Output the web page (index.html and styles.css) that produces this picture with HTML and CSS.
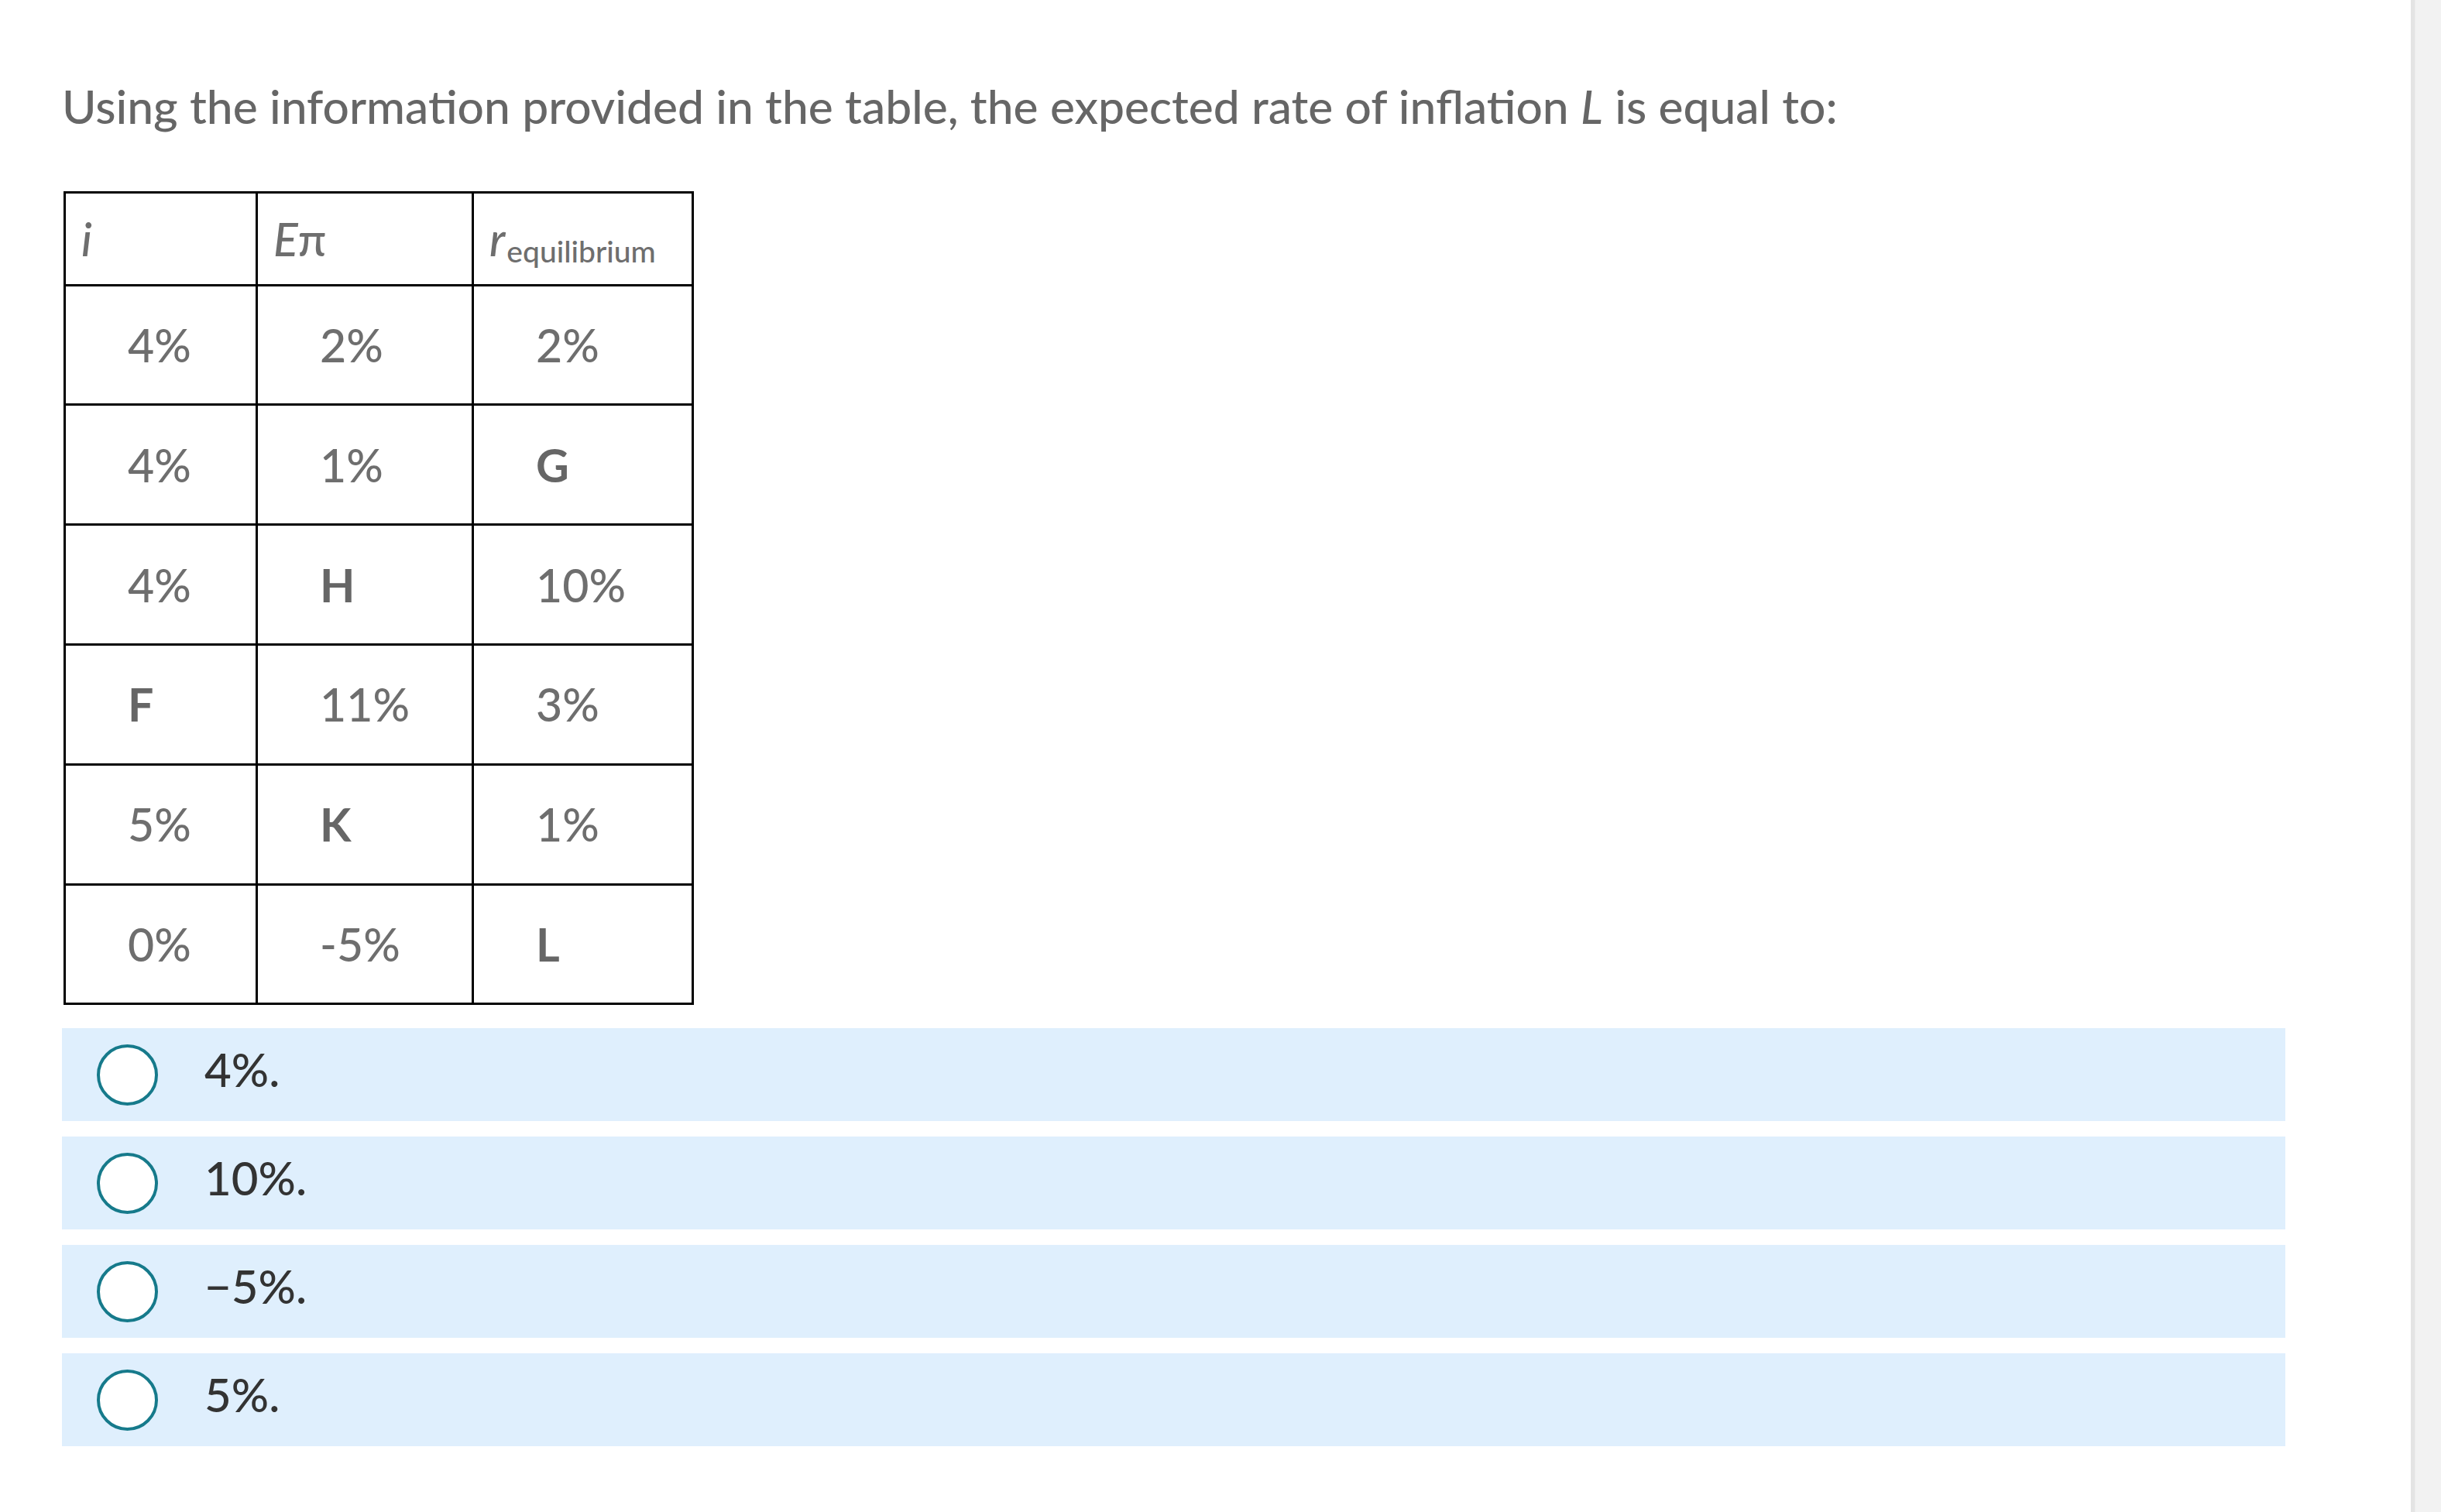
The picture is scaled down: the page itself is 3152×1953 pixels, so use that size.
FILE: index.html
```html
<!DOCTYPE html>
<html lang="en">
<head>
<meta charset="utf-8">
<title>Question</title>
<link rel="stylesheet" href="styles.css">
</head>
<body>
<div class="page">
  <main class="content">
    <p class="question">Using the information provided in the table, the expected rate of inflation <em>L</em> is equal to:</p>
    <table class="data">
      <colgroup>
        <col class="c1"><col class="c2"><col class="c3">
      </colgroup>
      <thead>
        <tr>
          <th><em>i</em></th>
          <th><em>E</em>π</th>
          <th><em>r</em><span class="sub">equilibrium</span></th>
        </tr>
      </thead>
      <tbody>
        <tr><td>4%</td><td>2%</td><td>2%</td></tr>
        <tr><td>4%</td><td>1%</td><td><b>G</b></td></tr>
        <tr><td>4%</td><td><b>H</b></td><td>10%</td></tr>
        <tr><td><b>F</b></td><td>11%</td><td>3%</td></tr>
        <tr><td>5%</td><td><b>K</b></td><td>1%</td></tr>
        <tr><td>0%</td><td>-5%</td><td><b>L</b></td></tr>
      </tbody>
    </table>
    <ul class="options">
      <li class="option"><span class="radio"></span><span class="label">4%.</span></li>
      <li class="option"><span class="radio"></span><span class="label">10%.</span></li>
      <li class="option"><span class="radio"></span><span class="label">−5%.</span></li>
      <li class="option"><span class="radio"></span><span class="label">5%.</span></li>
    </ul>
  </main>
  <aside class="side"></aside>
</div>
</body>
</html>
```

FILE: styles.css
```css
html, body {
  margin: 0;
  padding: 0;
  background: #ffffff;
}

body {
  font-family: Lato, "Open Sans", "Noto Sans", sans-serif;
}

.page {
  display: flex;
  min-height: 100vh;
}

.content {
  flex: 1;
  padding: 101px 162px 0 80px;
}

.side {
  width: 34px;
  background: #f2f2f2;
  border-left: 5px solid #e4e4e4;
  box-shadow: inset 1px 0 0 #ececec;
}

.question {
  margin: 0;
  font-size: 60.5px;
  font-weight: 500;
  line-height: 1.2;
  color: #666666;
}

.question em {
  font-style: italic;
}

.data {
  margin: 73px 0 0 2px;
  border-collapse: collapse;
  table-layout: fixed;
  width: 811px;
  color: #6e6e6e;
  font-size: 59px;
  font-weight: 500;
}

.data .c1 { width: 248px; }
.data .c2 { width: 279px; }
.data .c3 { width: 284px; }

.data th,
.data td {
  border: 3px solid #000;
  text-align: left;
  vertical-align: middle;
  padding: 0;
}

.data th {
  height: 117px;
  padding-left: 20px;
  font-weight: 500;
}

.data td {
  height: 151.8px;
  padding-left: 80px;
}

.data th em {
  font-style: italic;
}

.data .sub {
  font-size: 39px;
  position: relative;
  top: 8px;
  margin-left: 2px;
}

.data b {
  font-weight: 700;
  color: #666666;
}

.options {
  list-style: none;
  margin: 30px 0 0 0;
  padding: 0;
  display: flex;
  flex-direction: column;
  gap: 20px;
}

.option {
  display: flex;
  align-items: center;
  height: 120px;
  background: #dfeffd;
  padding-left: 45px;
}

.radio {
  width: 71px;
  height: 71px;
  border: 4px solid #167a8b;
  border-radius: 50%;
  background: #ffffff;
  flex: none;
}

.label {
  margin-left: 60px;
  font-size: 60px;
  font-weight: 500;
  color: #333333;
  position: relative;
  top: -7px;
}
```
